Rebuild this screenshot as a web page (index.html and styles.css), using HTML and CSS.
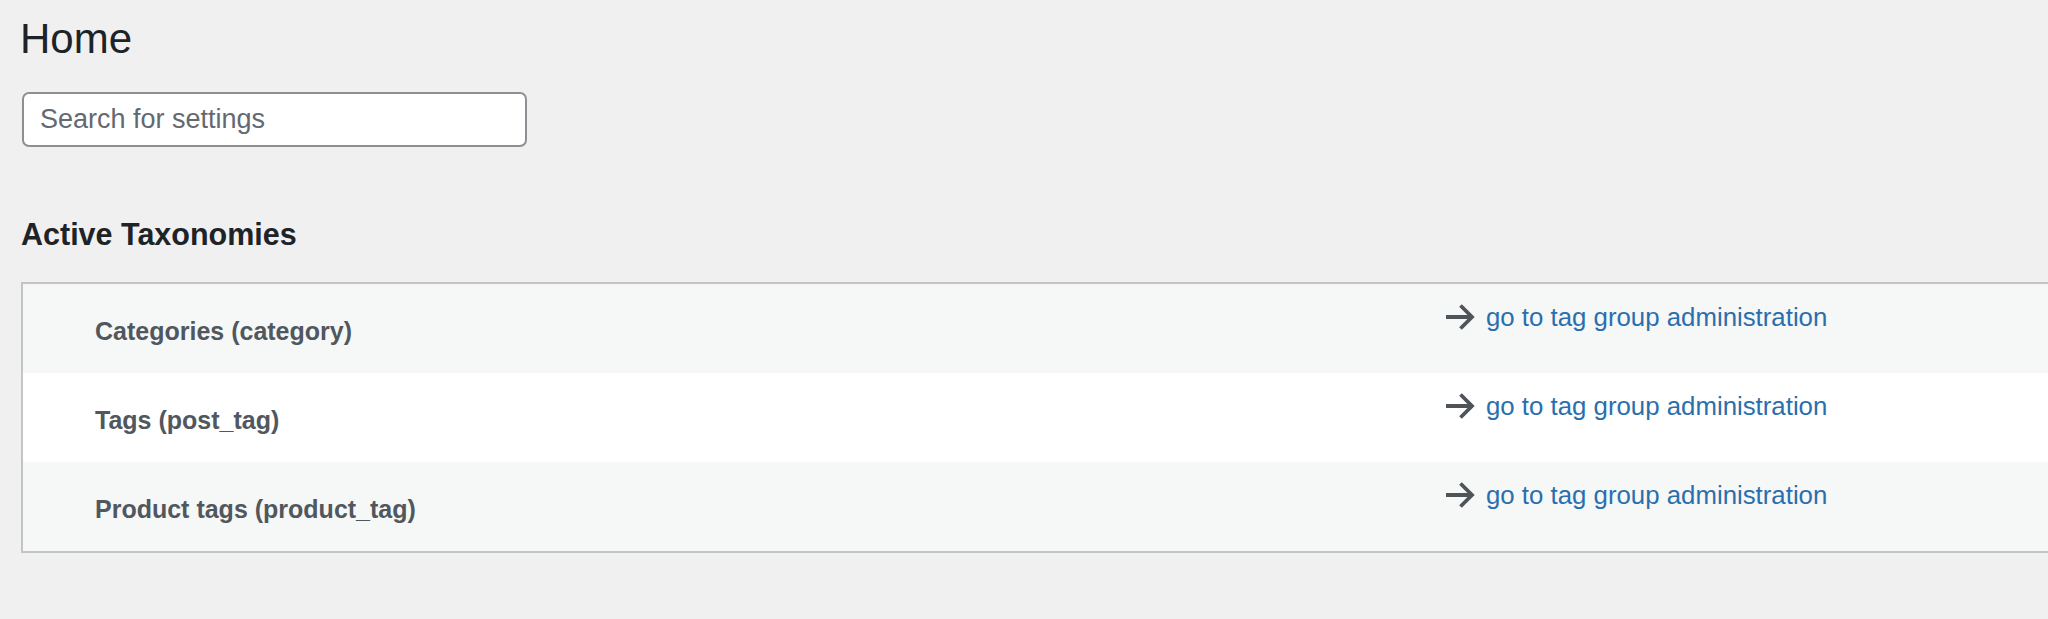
FILE: index.html
```html
<!DOCTYPE html>
<html lang="en">
<head>
<meta charset="utf-8">
<title>Home</title>
<link rel="stylesheet" href="styles.css">
</head>
<body>
<div class="wrap">
  <h1 class="page-title">Home</h1>
  <input class="search" type="search" placeholder="Search for settings">
  <h2 class="section-title">Active Taxonomies</h2>
  <div class="tax-table">
    <div class="tax-row striped">
      <div class="tax-name">Categories (category)</div>
      <div class="tax-action">
        <svg class="arrow" width="30" height="26" viewBox="0 0 30 26"><path d="M1 13 H27 M15.5 1.5 L27 13 L15.5 24.5" /></svg>
        <a href="#" class="tax-link">go to tag group administration</a>
      </div>
    </div>
    <div class="tax-row">
      <div class="tax-name">Tags (post_tag)</div>
      <div class="tax-action">
        <svg class="arrow" width="30" height="26" viewBox="0 0 30 26"><path d="M1 13 H27 M15.5 1.5 L27 13 L15.5 24.5" /></svg>
        <a href="#" class="tax-link">go to tag group administration</a>
      </div>
    </div>
    <div class="tax-row striped">
      <div class="tax-name">Product tags (product_tag)</div>
      <div class="tax-action">
        <svg class="arrow" width="30" height="26" viewBox="0 0 30 26"><path d="M1 13 H27 M15.5 1.5 L27 13 L15.5 24.5" /></svg>
        <a href="#" class="tax-link">go to tag group administration</a>
      </div>
    </div>
  </div>
</div>
</body>
</html>
```
FILE: styles.css
```css
html, body {
  margin: 0;
  padding: 0;
}
body {
  background: #f0f0f1;
  font-family: "Liberation Sans", Arial, sans-serif;
  color: #1d2327;
}
.wrap {
  display: flex;
  flex-direction: column;
  align-items: flex-start;
  padding-left: 21px;
}
.page-title {
  margin: 0 0 0 -1px;
  padding-top: 12px;
  font-size: 42px;
  line-height: 54px;
  font-weight: 400;
  color: #1d2327;
}
.search {
  box-sizing: border-box;
  margin: 26px 0 0 1px;
  width: 505px;
  height: 55px;
  padding: 0 16px;
  border: 2px solid #8c8f94;
  border-radius: 7px;
  background: #fff;
  font-family: "Liberation Sans", Arial, sans-serif;
  font-size: 27px;
  color: #2c3338;
  outline: none;
}
.search::placeholder {
  color: #646970;
}
.section-title {
  margin: 68px 0 0 0;
  font-size: 30.5px;
  line-height: 39px;
  font-weight: 700;
  color: #1d2327;
}
.tax-table {
  align-self: stretch;
  margin-top: 28px;
  border: 2px solid #c3c4c7;
  border-right: 0;
  background: #fff;
}
.tax-row {
  display: grid;
  grid-template-columns: 1422px 1fr;
  height: 89px;
  background: #fff;
}
.tax-row.striped {
  background: #f6f7f7;
}
.tax-name {
  padding: 31px 0 0 72px;
  font-size: 25px;
  line-height: 32px;
  font-weight: 700;
  color: #50575e;
}
.tax-action {
  display: flex;
  align-items: center;
  align-self: start;
  gap: 11px;
  padding-top: 17px;
}
.arrow {
  display: block;
  flex: none;
}
.arrow path {
  fill: none;
  stroke: #4f545b;
  stroke-width: 3.8;
  stroke-linejoin: miter;
}
.tax-link {
  font-size: 25.8px;
  line-height: 32px;
  color: #2a6fad;
  text-decoration: none;
}
```
